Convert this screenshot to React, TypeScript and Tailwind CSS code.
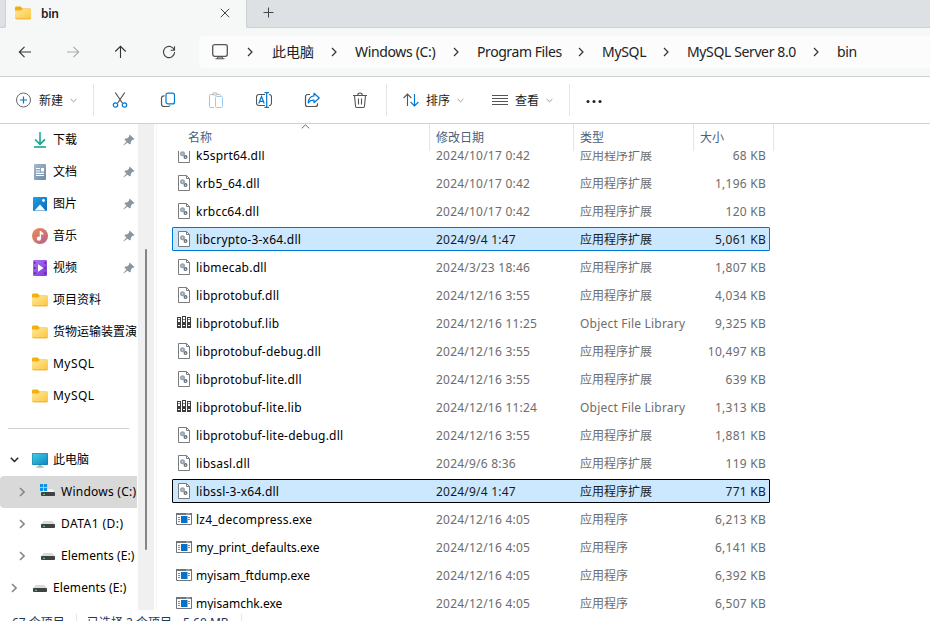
import { Fragment } from 'react'
import type { ReactNode } from 'react'
import clsx from 'clsx'

type FileKind = 'dll' | 'lib' | 'exe'

interface FileRow {
  name: string
  date: string
  kind: FileKind
  size: string
  state?: 'selected' | 'focused'
  tight?: boolean
}

const TYPE_LABELS: Record<FileKind, string> = {
  dll: '应用程序扩展',
  lib: 'Object File Library',
  exe: '应用程序',
}

const FILES: FileRow[] = [
  { name: 'k5sprt64.dll', date: '2024/10/17 0:42', kind: 'dll', size: '68 KB' },
  { name: 'krb5_64.dll', date: '2024/10/17 0:42', kind: 'dll', size: '1,196 KB' },
  { name: 'krbcc64.dll', date: '2024/10/17 0:42', kind: 'dll', size: '120 KB' },
  { name: 'libcrypto-3-x64.dll', date: '2024/9/4 1:47', kind: 'dll', size: '5,061 KB', state: 'selected' },
  { name: 'libmecab.dll', date: '2024/3/23 18:46', kind: 'dll', size: '1,807 KB' },
  { name: 'libprotobuf.dll', date: '2024/12/16 3:55', kind: 'dll', size: '4,034 KB' },
  { name: 'libprotobuf.lib', date: '2024/12/16 11:25', kind: 'lib', size: '9,325 KB' },
  { name: 'libprotobuf-debug.dll', date: '2024/12/16 3:55', kind: 'dll', size: '10,497 KB' },
  { name: 'libprotobuf-lite.dll', date: '2024/12/16 3:55', kind: 'dll', size: '639 KB' },
  { name: 'libprotobuf-lite.lib', date: '2024/12/16 11:24', kind: 'lib', size: '1,313 KB' },
  { name: 'libprotobuf-lite-debug.dll', date: '2024/12/16 3:55', kind: 'dll', size: '1,881 KB' },
  { name: 'libsasl.dll', date: '2024/9/6 8:36', kind: 'dll', size: '119 KB' },
  { name: 'libssl-3-x64.dll', date: '2024/9/4 1:47', kind: 'dll', size: '771 KB', state: 'focused' },
  { name: 'lz4_decompress.exe', date: '2024/12/16 4:05', kind: 'exe', size: '6,213 KB' },
  { name: 'my_print_defaults.exe', date: '2024/12/16 4:05', kind: 'exe', size: '6,141 KB', tight: true },
  { name: 'myisam_ftdump.exe', date: '2024/12/16 4:05', kind: 'exe', size: '6,392 KB', tight: true },
  { name: 'myisamchk.exe', date: '2024/12/16 4:05', kind: 'exe', size: '6,507 KB', tight: true },
]

const CRUMBS = [
  { label: '此电脑', width: 'w-[83px]', tracking: '' },
  { label: 'Windows (C:)', width: 'w-[122px]', tracking: 'tracking-[-0.35px]' },
  { label: 'Program Files', width: 'w-[125px]', tracking: 'tracking-[-0.42px]' },
  { label: 'MySQL', width: 'w-[85px]', tracking: 'tracking-[-0.3px]' },
  { label: 'MySQL Server 8.0', width: 'w-[150px]', tracking: 'tracking-[-0.38px]' },
  { label: 'bin', width: 'w-[60px]', tracking: 'tracking-[-0.4px]' },
]

const DRIVES = [
  { label: 'Windows (C:)', tracking: 'tracking-[0.25px]' },
  { label: 'DATA1 (D:)', tracking: 'tracking-[0.45px]' },
  { label: 'Elements (E:)', tracking: 'tracking-[0.1px]' },
]

interface IconProps {
  children: ReactNode
  className?: string
  w?: number
  h?: number
}

function Icon({ children, className, w = 16, h = 16 }: IconProps) {
  return (
    <svg width={w} height={h} viewBox={`0 0 ${w} ${h}`} fill="none" stroke="currentColor" className={clsx('block shrink-0', className)}>
      {children}
    </svg>
  )
}

function ChevronRight({ className, bold = false }: { className?: string; bold?: boolean }) {
  return (
    <Icon w={6} h={10} className={className}>
      <path d="M1 1l4 4-4 4" strokeWidth={bold ? 1.6 : 1.2} />
    </Icon>
  )
}

function ChevronDown() {
  return (
    <Icon w={7} h={5} className="text-[#999]">
      <path d="M.6 1l2.9 2.8L6.4 1" />
    </Icon>
  )
}

function FolderIcon() {
  return (
    <Icon h={14}>
      <g stroke="none">
        <path d="M0 2a1.4 1.4 0 0 1 1.4-1.4h4.2L7.6 2.5h7A1.4 1.4 0 0 1 16 3.9V6H0z" fill="#f5ae0c" />
        <path d="M0 4.6h6L8 3h6.8A1.2 1.2 0 0 1 16 4.2V12a1.2 1.2 0 0 1-1.2 1.200H1.2A1.2 1.2 0 0 1 0 12z" fill="url(#folder)" />
        <path d="M.3 12.4h15.400l-.9.9H1.200z" fill="#eba31c" />
      </g>
    </Icon>
  )
}

function DownloadsIcon() {
  return (
    <Icon>
      <path d="M8 0v12M3 7.300l5 5 5-5" stroke="url(#teal)" strokeWidth="1.7" />
      <path d="M2 15h12" stroke="#17a68e" strokeWidth="1.6" />
    </Icon>
  )
}

function DocumentsIcon() {
  return (
    <Icon>
      <rect x="2" y="0" width="12" height="16" rx="1" fill="url(#doc)" stroke="none" />
      <path d="M4 4.500h4M4 7h4M4 9.300h8M4 11.500h8" stroke="#fff" strokeWidth="1.2" />
      <rect x="9" y="4" width="3" height="3.5" fill="#fff" stroke="none" />
    </Icon>
  )
}

function PicturesIcon() {
  return (
    <Icon>
      <g stroke="none">
        <rect x="1" y="1" width="14" height="14" rx="1" fill="url(#pic)" />
        <path d="M2.500 14.600L8 8.500l5.500 6.100z" fill="#fff" />
        <circle cx="11.5" cy="4.5" r="1.4" fill="#fff" />
      </g>
    </Icon>
  )
}

function MusicIcon() {
  return (
    <Icon>
      <g stroke="none">
        <circle cx="8" cy="8" r="8" fill="url(#music)" />
        <circle cx="6.9" cy="10.7" r="2.1" fill="#fff" />
        <path d="M7.700 3h1.400c.2 1.200.7 1.600 2.200 1.700v2c-.9 0-1.600-.2-2.200-.6v4.600H7.700z" fill="#fff" />
      </g>
    </Icon>
  )
}

function VideosIcon() {
  return (
    <Icon>
      <g stroke="none">
        <rect x="1" y="0" width="14" height="16" rx="1" fill="url(#video)" />
        <path d="M6 4.200l5.500 3.800L6 11.800z" fill="#fff" />
        <path d="M2 2h1.600v1.600H2zM2 7.200h1.600v1.600H2zM2 12.400h1.600V14H2zM12.400 2H14v1.600h-1.600zM12.400 7.200H14v1.600h-1.600zM12.400 12.400H14V14h-1.600z" fill="#4a2391" />
      </g>
    </Icon>
  )
}

function PinIcon() {
  return (
    <Icon w={12} h={12} className="mr-0.5 text-[#8a979f]">
      <path d="M6.600.5l4.900 4.500-1.200.8-1 .1-1.500 1.900.1 1.700-1.200 1-2.300-2.100L.8 11.500.4 11.100l3-3.500L1.300 5.500l1-1.100 2.100-.1 1.500-1.500z" fill="currentColor" stroke="none" />
    </Icon>
  )
}

function PcIcon() {
  return (
    <Icon>
      <g stroke="none">
        <rect x="0" y="1" width="16" height="12" rx="1" fill="#147f9f" />
        <rect x=".5" y="1.5" width="15" height="11" rx=".5" fill="url(#screen)" />
        <path d="M6.500 13h3v1.600h-3z" fill="#9fb0ba" />
        <path d="M4.500 14.600h7v.9h-7z" fill="#7d8d97" />
      </g>
    </Icon>
  )
}

function DriveIcon({ windows = false }: { windows?: boolean }) {
  return (
    <Icon>
      <g stroke="none">
        <path d="M3.600 5h8.800l2.400 3.600H1.200z" fill={windows ? '#f0f0f0' : '#d9dadc'} />
        <rect x="1" y="8" width="14" height="4" rx=".8" fill="#3f4143" />
        <rect x="3" y="9.8" width="2" height="1" fill="#55e36c" />
        {windows && (
          <path d="M0 0h3.200v3.200H0zM3.900 0h3.200v3.200H3.900zM0 3.900h3.200v3.200H0zM3.900 3.900h3.200v3.200H3.900z" fill="#0f92e3" />
        )}
      </g>
    </Icon>
  )
}

function FileIcon({ kind }: { kind: FileKind }) {
  if (kind === 'lib') {
    return (
      <Icon>
        <g stroke="none">
          <path d="M0 2h4v11H0zM5 1h4v12H5zM10 2h4v11h-4z" fill="#3c3c3c" />
          <path d="M1 3h2v4H1zM6 2h2v5H6zM11 3h2v4h-2zM1 10h2v1H1zM6 10h2v1H6zM11 10h2v1h-2z" fill="#fff" />
          <path d="M1 4h2v1H1zM6 4h2v1H6zM11 4h2v1h-2z" fill="#777" />
        </g>
      </Icon>
    )
  }
  if (kind === 'exe') {
    return (
      <Icon className="-ml-px">
        <path d="M.5 2.500h15v11H.5z" fill="#fff" stroke="#70757a" />
        <path d="M0 3h16" stroke="#70757a" strokeWidth="2" />
        <path d="M10.500 3h1M12.500 3h1" stroke="#fff" />
        <path d="M2 6.500h2M2 8.500h2M2 10.500h2M12 6.500h2M12 8.500h2" stroke="#888" />
        <rect x="5" y="5" width="6.5" height="7" fill="#0870c8" stroke="none" />
      </Icon>
    )
  }
  return (
    <Icon>
      <path d="M1.500.5h8l3 3v12h-11z" fill="#fff" stroke="#7b7d7d" />
      <path d="M9.500.5v3h3" stroke="#7b7d7d" />
      <circle cx="5.5" cy="6.7" r="1.6" fill="#d5dbe0" stroke="#97a4af" strokeWidth="1.8" />
      <circle cx="8.5" cy="10.1" r="1.3" stroke="#68747d" strokeWidth="1.4" />
    </Icon>
  )
}

function Gradients() {
  const stops = [
    ['folder', '#ffe8a0', '#fdc63c'],
    ['teal', '#35c69a', '#11998f'],
    ['doc', '#a6b9cc', '#6c89a6'],
    ['pic', '#1ea0e8', '#0b68b8'],
    ['music', '#ee9050', '#b55d92'],
    ['video', '#b070ef', '#7e3ad8'],
    ['screen', '#3ccfe2', '#1584c4'],
  ]
  return (
    <svg width="0" height="0" className="absolute">
      <defs>
        {stops.map(([id, from, to]) => (
          <linearGradient key={id} id={id} x1="0" y1="0" x2="1" y2="1">
            <stop stopColor={from} />
            <stop offset="1" stopColor={to} />
          </linearGradient>
        ))}
      </defs>
    </svg>
  )
}

function TabStrip() {
  return (
    <div className="flex h-7 bg-[#dde1e3]">
      <div className="w-1.5 rounded-br border-r border-b border-[#cdd1d2]" />
      <div className="flex w-60 items-center bg-[#f6f8f7] pb-0.5 pl-[9px]">
        <FolderIcon />
        <span className="ml-2.5 pt-px text-[12px] font-semibold tracking-[-0.3px] text-[#1b1b1b]">bin</span>
        <Icon w={10} h={10} className="mr-4 ml-auto text-[#444]">
          <path d="M.8.8l8.400 8.400M9.200.8L.8 9.200" />
        </Icon>
      </div>
      <div className="flex-1 rounded-bl border-b border-l border-[#cdd1d2] pt-[7px] pl-4">
        <Icon w={11} h={11} className="text-[#444]">
          <path d="M5.500.5v10M.5 5.500h10" />
        </Icon>
      </div>
    </div>
  )
}

function NavBar() {
  return (
    <div className="flex h-[49px] items-center border-b border-[#cdd1d1] bg-[#f6f8f7] pl-[18px]">
      <Icon w={14} className="text-[#333]">
        <path d="M13 8H1.500M6.500 2.800L1.300 8l5.200 5.200" strokeWidth="1.1" />
      </Icon>
      <Icon w={14} className="ml-[34px] text-[#aaa]">
        <path d="M1 8h11.500M7.500 2.800L12.700 8l-5.200 5.200" strokeWidth="1.1" />
      </Icon>
      <Icon w={14} className="ml-[34px] text-[#333]">
        <path d="M6.500 14V2.500M1.300 7.500l5.200-5.200 5.200 5.200" strokeWidth="1.1" />
      </Icon>
      <Icon w={14} className="ml-[34px] text-[#444]">
        <path d="M12.300 6.200A5.600 5.600 0 1 0 12.600 8M12.500 2.300v4H8.600" strokeWidth="1.1" />
      </Icon>
      <div className="ml-[23px] flex h-8 flex-1 items-center rounded-l bg-[#fcfcfc] pl-[13px]">
        <Icon className="text-[#555]">
          <rect x=".7" y=".7" width="14.6" height="11.6" rx="2" strokeWidth="1.3" />
          <path d="M5.700 12.500v2.200M10.300 12.500v2.200M3.500 14.700h9" strokeWidth="1.1" />
          <path d="M6 13.500h4" stroke="#999" />
        </Icon>
        <ChevronRight className="mr-[19px] ml-[19px] text-[#333]" />
        {CRUMBS.map((crumb, i) => (
          <div key={crumb.label} className={clsx('flex items-center justify-between whitespace-nowrap text-[14px] text-[#222]', crumb.width)}>
            <span className={clsx('pb-0.5', crumb.tracking)}>{crumb.label}</span>
            {i < CRUMBS.length - 1 && <ChevronRight className="mr-[18px] text-[#333]" />}
          </div>
        ))}
      </div>
    </div>
  )
}

function Divider() {
  return <div className="h-8 w-px bg-[#e5e5e5]" />
}

function MenuLabel({ children }: { children: string }) {
  return <span className="mr-[7px] w-6 pt-0.5 whitespace-nowrap">{children}</span>
}

function Toolbar() {
  return (
    <div className="flex h-[47px] items-center border-b border-[#cfd2d2] bg-white pl-4 text-[12px] text-[#1b1b1b]">
      <Icon className="mr-[7px] text-[#666]">
        <circle cx="7.5" cy="8" r="7" />
        <path d="M7.500 4.500v7M4 8h7" stroke="#0078d4" strokeWidth="1.2" />
      </Icon>
      <MenuLabel>新建</MenuLabel>
      <ChevronDown />
      <div className="w-4" />
      <Divider />

      <div className="flex gap-8 px-[18px] text-[#555]">
        <Icon>
          <path d="M3.300.5l7 10.500M12.700.5L5.700 11" strokeWidth="1.2" />
          <circle cx="3.5" cy="13" r="2.2" stroke="#0078d4" strokeWidth="1.2" />
          <circle cx="12.5" cy="13" r="2.2" stroke="#0078d4" strokeWidth="1.2" />
        </Icon>
        <Icon>
          <path d="M4.500 3.800h-.5a2.500 2.500 0 0 0-2.500 2.500v5.700a2.500 2.500 0 0 0 2.500 2.500h4a2.500 2.500 0 0 0 2-1" strokeWidth="1.2" />
          <rect x="6" y="1.1" width="8.5" height="10.8" rx="2" stroke="#0078d4" strokeWidth="1.2" />
        </Icon>
        <Icon className="text-[#bbb]">
          <path d="M5 2.500H2.500a1 1 0 0 0-1 1v11a1 1 0 0 0 1 1H6M9 2.500h2.500a1 1 0 0 1 1 1V4M5 1h4v2H5z" />
          <rect x="7.5" y="4.5" width="7" height="11" rx="1" stroke="#9dcbef" />
        </Icon>
        <Icon>
          <path d="M9 2.500H3a2.500 2.500 0 0 0-2.500 2.500v6A2.500 2.500 0 0 0 3 13.500h6M13 2.500a2.500 2.500 0 0 1 2.500 2.500v6a2.500 2.500 0 0 1-2.500 2.500" strokeWidth="1.1" />
          <path d="M10.700.6v14.800M8.500.6h4.500M8.500 15.400H13M2.800 11.500l2.700-7 2.700 7M3.700 9.300h3.600" stroke="#0078d4" strokeWidth="1.2" />
        </Icon>
        <Icon>
          <path d="M6 2.500H3.500a2 2 0 0 0-2 2v8a2 2 0 0 0 2 2h8a2 2 0 0 0 2-2v-1.200" strokeWidth="1.2" />
          <path d="M10 1.300l5.200 4.700L10 10.700V8.200C7.200 8 5.500 9 4.300 10.800 4.500 7 6.600 4.200 10 3.900z" stroke="#0078d4" strokeWidth="1.2" strokeLinejoin="round" />
        </Icon>
        <Icon>
          <path d="M1 3.500h14M5.700 3.300a2.300 2.300 0 0 1 4.600 0M2.500 3.500l1 10.500a1.500 1.500 0 0 0 1.500 1.500h6a1.500 1.500 0 0 0 1.500-1.500l1-10.500M6.500 6.500v6M9.500 6.500v6" strokeWidth="1.1" />
        </Icon>
      </div>
      <Divider />

      <Icon className="mr-[7px] ml-4 text-[#555]">
        <path d="M4.500 14V2M.6 6l3.900-4 3.900 4" strokeWidth="1.1" />
        <path d="M11.500 2v12M7.600 10l3.900 4 3.900-4" stroke="#0078d4" strokeWidth="1.2" />
      </Icon>
      <MenuLabel>排序</MenuLabel>
      <ChevronDown />
      <Icon className="mr-[7px] ml-7 text-[#555]">
        <path d="M0 3.500h16M0 6.500h16M0 9.500h16M0 12.500h16" />
      </Icon>
      <MenuLabel>查看</MenuLabel>
      <ChevronDown />
      <div className="w-4" />
      <Divider />
      <Icon className="ml-4 text-[#222]">
        <g fill="currentColor" stroke="none">
          <circle cx="2" cy="9.5" r="1.5" />
          <circle cx="8" cy="9.5" r="1.5" />
          <circle cx="14" cy="9.5" r="1.5" />
        </g>
      </Icon>
    </div>
  )
}

interface SideItemProps {
  icon: ReactNode
  label: string
  pinned?: boolean
}

function SideItem({ icon, label, pinned = false }: SideItemProps) {
  return (
    <div className="flex h-8 items-center whitespace-nowrap pl-8">
      {icon}
      <span className={clsx('ml-[5px]', label === 'MySQL' && 'tracking-[0.45px]')}>{label}</span>
      {pinned && (
        <div className="ml-auto">
          <PinIcon />
        </div>
      )}
    </div>
  )
}

function Sidebar() {
  return (
    <div className="w-[137px] shrink-0 text-[12px] text-black">
      <SideItem icon={<DownloadsIcon />} label="下载" pinned />
      <SideItem icon={<DocumentsIcon />} label="文档" pinned />
      <SideItem icon={<PicturesIcon />} label="图片" pinned />
      <SideItem icon={<MusicIcon />} label="音乐" pinned />
      <SideItem icon={<VideosIcon />} label="视频" pinned />
      <SideItem icon={<FolderIcon />} label="项目资料" />
      <SideItem icon={<FolderIcon />} label="货物运输装置演" />
      <SideItem icon={<FolderIcon />} label="MySQL" />
      <SideItem icon={<FolderIcon />} label="MySQL" />
      <div className="mx-2 h-8 pt-4">
        <div className="h-px bg-[#d0d0d0]" />
      </div>

      <div className="flex h-8 items-center pl-2.5">
        <Icon w={9} h={6} className="mr-[13px] text-[#222]">
          <path d="M.8.8l3.700 3.700L8.200.8" strokeWidth="1.5" />
        </Icon>
        <PcIcon />
        <span className="ml-[5px]">此电脑</span>
      </div>
      {DRIVES.map((drive, i) => (
        <div key={drive.label} className={clsx('flex h-8 items-center whitespace-nowrap pl-[19px]', i === 0 && 'rounded-l bg-[#d9d9d9]')}>
          <ChevronRight bold className="mr-[15px] text-[#888]" />
          <DriveIcon windows={i === 0} />
          <span className={clsx('ml-[5px]', drive.tracking)}>{drive.label}</span>
        </div>
      ))}
      <div className="flex h-8 items-center pl-[11px]">
        <ChevronRight bold className="mr-[15px] text-[#888]" />
        <DriveIcon />
        <span className="ml-[5px] tracking-[0.1px]">Elements (E:)</span>
      </div>
    </div>
  )
}

function FileList() {
  return (
    <div className="flex min-w-0 flex-1 flex-col pl-[15px] text-[12px]">
      <div className="relative flex h-[27px] shrink-0 text-[#4c607a]">
        <div className="w-[258px] border-r border-[#e5e5e5] pl-4 leading-[27px]">名称</div>
        <div className="w-36 border-r border-[#e5e5e5] pl-1.5 leading-[27px]">修改日期</div>
        <div className="w-[120px] border-r border-[#e5e5e5] pl-1.5 leading-[27px]">类型</div>
        <div className="w-20 border-r border-[#e5e5e5] pl-1.5 leading-[27px]">大小</div>
        <Icon w={9} h={5} className="absolute top-0 left-[129px] text-[#666]">
          <path d="M.8 4.400L4.500.8l3.700 3.600" />
        </Icon>
      </div>

      <div className="min-h-0 flex-1 overflow-hidden">
        <div className="-mt-2 flex flex-col gap-1">
          {FILES.map((file) => (
            <div
              key={file.name}
              className={clsx(
                'flex h-6 w-[598px] items-center rounded-[1px] border whitespace-nowrap',
                file.state ? 'bg-[#cce8ff] text-[#1b1b1b]' : 'border-transparent text-[#6d6d6d]',
                file.state === 'selected' && 'border-[#0078d7]',
                file.state === 'focused' && 'border-black',
              )}
            >
              <div className="flex w-[263px] items-center pl-1 text-black">
                <div className="w-[19px]">
                  <FileIcon kind={file.kind} />
                </div>
                <span className={clsx('pt-0.5', !file.tight && 'tracking-[0.22px]')}>{file.name}</span>
              </div>
              <div className="w-36 pt-0.5 tracking-[0.22px]">{file.date}</div>
              <div className={clsx('w-[106px] pt-0.5', file.kind === 'lib' && 'tracking-[0.2px]')}>{TYPE_LABELS[file.kind]}</div>
              <div className="w-20 pt-0.5 text-right tracking-[0.25px]">{file.size}</div>
            </div>
          ))}
        </div>
      </div>
    </div>
  )
}

function StatusBar() {
  const items = [
    { text: '67 个项目', cell: 'w-[76px] pl-3' },
    { text: '已选择 2 个项目', cell: 'w-[91px] pl-2.5' },
    { text: '5.60 MB', cell: 'w-[73px] pl-[15px]' },
  ]
  return (
    <div className="flex h-[11px] overflow-hidden bg-white text-[12px] leading-[25px] text-[#1e395b]">
      {items.map((item, i) => (
        <Fragment key={item.text}>
          <div className={clsx('shrink-0 whitespace-nowrap', item.cell)}>{item.text}</div>
          {i !== 1 && <div className="mt-1 h-4 w-px bg-[#e5e5e5]" />}
        </Fragment>
      ))}
    </div>
  )
}

export default function App() {
  return (
    <div className="flex h-[621px] w-[930px] flex-col overflow-hidden bg-white font-['Noto_Sans','Noto_Sans_CJK_SC',sans-serif]">
      <Gradients />
      <TabStrip />
      <NavBar />
      <Toolbar />
      <div className="flex h-[486px] overflow-hidden">
        <Sidebar />
        <div className="ml-px w-4 shrink-0 bg-[#f0f0f0] pt-[125px]">
          <div className="ml-[7px] h-[301px] w-0.5 rounded-full bg-[#858585]" />
        </div>
        <div className="ml-[2px] w-px shrink-0 bg-[#f5f5f5]" />
        <FileList />
      </div>
      <StatusBar />
    </div>
  )
}
